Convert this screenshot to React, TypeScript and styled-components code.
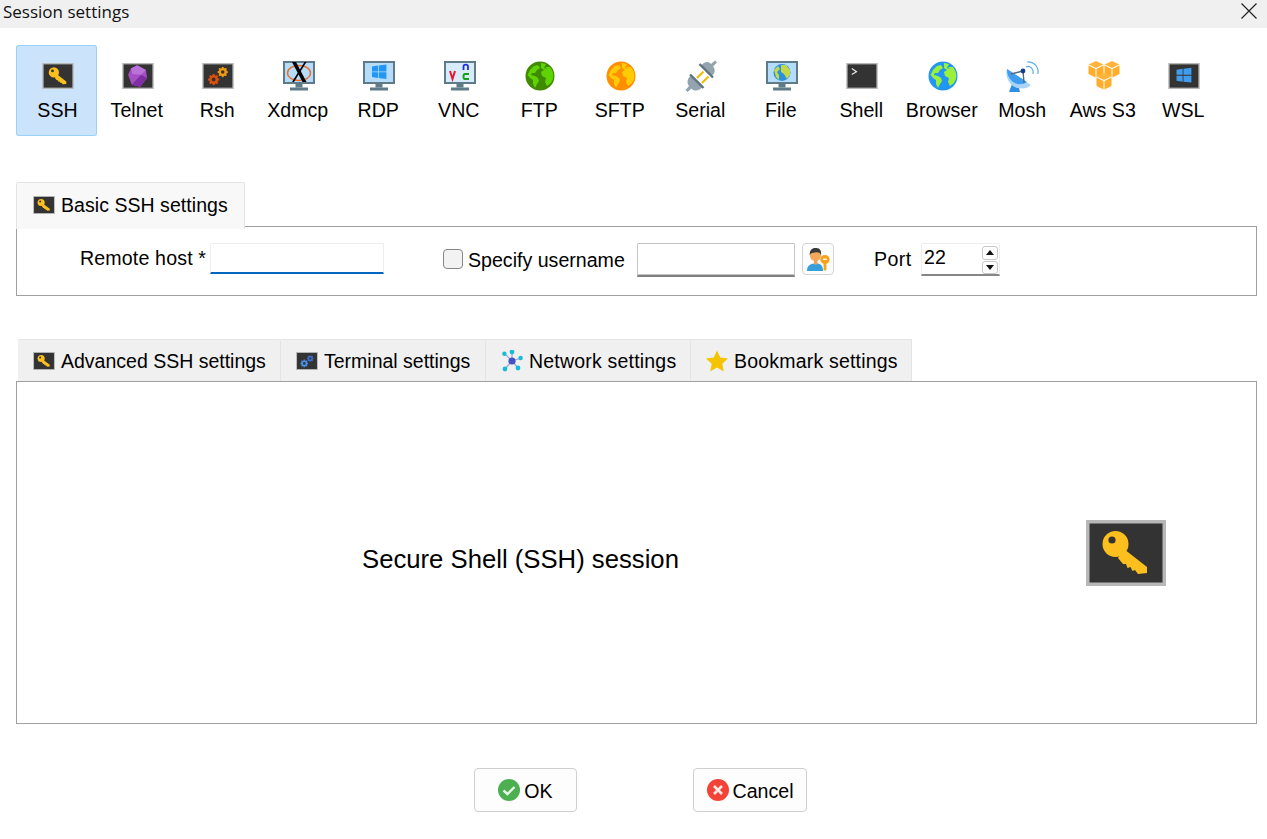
import React from "react";
import styled, { createGlobalStyle } from "styled-components";

const GlobalStyle = createGlobalStyle`
  html, body {
    margin: 0;
    padding: 0;
    background: #fff;
  }
  body {
    font-family: "Liberation Sans", Arial, sans-serif;
    color: #000;
    overflow: hidden;
  }
`;

/* ---------- icons ---------- */

const KeyShape = () => (
  <g fill="#fdbf1e">
    <circle cx="29.5" cy="24" r="13" />
    <path d="M38 29 L61 47 L61 53 L52 54 L49 50 L46.5 51 L44.5 47 L41.5 48 L40 44 L37 44 L32 38 Z" />
    <circle cx="26" cy="20" r="3.6" fill="#333" />
  </g>
);

const Tile = ({ children, w, h }: { children: React.ReactNode; w: number; h: number }) => (
  <svg width={w} height={h} viewBox="0 0 80 66">
    <rect x="0" y="0" width="80" height="66" fill="#b8b8b8" />
    <rect x="3.5" y="3.5" width="73" height="59" fill="#333" />
    {children}
  </svg>
);

const Gear = ({ cx, cy, r, fill }: { cx: number; cy: number; r: number; fill: string }) => (
  <g>
    <circle cx={cx} cy={cy} r={r * 0.62} fill="none" stroke={fill} strokeWidth={r * 0.48} />
    {[0, 45, 90, 135, 180, 225, 270, 315].map((a) => (
      <rect
        key={a}
        x={cx - r * 0.2}
        y={cy - r * 1.08}
        width={r * 0.4}
        height={r * 0.4}
        fill={fill}
        transform={`rotate(${a} ${cx} ${cy})`}
      />
    ))}
  </g>
);

const WindowsPanes = ({ x, y, s, fill }: { x: number; y: number; s: number; fill: string }) => (
  <path
    fill={fill}
    transform={`translate(${x} ${y}) scale(${s})`}
    d="M0 2.4 L7.4 1.3 V8.6 H0 Z M8.4 1.1 L18 0 V8.6 H8.4 Z M0 9.6 H7.4 V16.8 L0 15.7 Z M8.4 9.6 H18 V18 L8.4 16.9 Z"
  />
);

const Monitor = ({ children }: { children: React.ReactNode }) => (
  <svg width="32" height="32" viewBox="0 0 32 32">
    <rect x="0" y="1" width="32" height="23" fill="#5f7b88" />
    <rect x="2" y="3" width="28" height="19" fill="#b6dcfb" />
    <rect x="12.5" y="24" width="7" height="3.5" fill="#5f7b88" />
    <rect x="7" y="27.5" width="18" height="3" fill="#5f7b88" />
    {children}
  </svg>
);

const Globe = ({ sea, land, size = 32 }: { sea: string; land: string; size?: number }) => (
  <svg width={size} height={size} viewBox="0 0 32 32">
    <circle cx="16" cy="16" r="14.5" fill={sea} />
    <path
      fill={land}
      d="M17 3 L22 4 L20 8 L23 9 L21 7 L26 7 C29 11 30 15 29 19 L27 23 L23 26 L21 22 L22 18 L18 16 L17 12 L20 10 L17 8 Z M6 10 L10 6 L14 5 L16 8 L13 10 L11 13 L8 13 L7 15 L11 16 L14 18 L15 21 L13 24 L11 28 L9 24 L9 20 L6 18 L3.5 15 Z"
    />
  </svg>
);

const icons: Record<string, React.ReactNode> = {
  SSH: (
    <Tile w={32} h={26}>
      <KeyShape />
    </Tile>
  ),
  Telnet: (
    <Tile w={32} h={26}>
      <path d="M38 6 L60 18 L63 38 L46 60 L24 55 L15 30 L22 14 Z" fill="#a64fc4" />
      <path d="M38 6 L60 18 L48 30 L26 28 L22 14 Z" fill="#bb72da" />
      <path d="M48 30 L63 38 L46 60 L24 55 Z" fill="#7f2fa3" />
    </Tile>
  ),
  Rsh: (
    <Tile w={32} h={26}>
      <Gear cx={52} cy={23} r={12} fill="#f29a10" />
      <Gear cx={29} cy={42} r={13} fill="#e0500c" />
    </Tile>
  ),
  Xdmcp: (
    <Monitor>
      <ellipse cx="16" cy="13" rx="11.5" ry="7.5" fill="none" stroke="#e8702a" strokeWidth="1.4" />
      <path d="M9 2 H13 L23.5 22 H19.5 Z" fill="#000" />
      <path d="M21.5 2 H23.5 L11 22 H9 Z" fill="#000" />
    </Monitor>
  ),
  RDP: (
    <Monitor>
      <WindowsPanes x={9} y={4.5} s={0.8} fill="#2196f3" />
    </Monitor>
  ),
  VNC: (
    <Monitor>
      <rect x="2" y="3" width="28" height="19" fill="#d8ebfb" />
      <path d="M6 11 L8.5 19 L11 11" fill="none" stroke="#e8192c" strokeWidth="2" />
      <path d="M19.5 10 V6.5 C19.5 4 24 4 24 6.5 V10" fill="none" stroke="#2030e0" strokeWidth="1.8" />
      <path d="M25 14 H21 C19 14 19 19 21 19 H25" fill="none" stroke="#14a014" strokeWidth="2" />
    </Monitor>
  ),
  FTP: <Globe sea="#3f8a00" land="#5fd300" />,
  SFTP: <Globe sea="#ff8f00" land="#ffcb05" />,
  Serial: (
    <svg width="32" height="32" viewBox="0 0 32 32">
      <path d="M12 18 L18.5 11.5 M17 23 L23.5 16.5" stroke="#f5b800" strokeWidth="2" />
      <path d="M7 15 L18 26 C15 31 9 32 6.5 28.5 L2.5 32 L0.5 30 L4 26 C1 22 3 17 7 15 Z" fill="#93a4af" />
      <path d="M16 6 C19 1 24 1 26 4 L30 0.5 L32 2.5 L28 6.5 C31 10 30 14 26 16 Z" fill="#93a4af" />
      <path d="M5 14.5 L18.5 28 M14.5 4 L28 17.5" stroke="#5f7480" strokeWidth="2.4" />
    </svg>
  ),
  File: (
    <Monitor>
      <circle cx="16" cy="12.5" r="8.5" fill="#2c8fe0" />
      <path
        d="M15 5 L20 5 L24 10 L24 15 L21 19 L18 14 L15 12 Z M8 10 L12 6 L14 9 L11 12 L13 15 L13 20 L10 17 Z"
        fill="#c3d94a"
      />
    </Monitor>
  ),
  Shell: (
    <Tile w={32} h={26}>
      <path d="M14 14 L26 22 L14 29" fill="none" stroke="#e8e8e8" strokeWidth="3" />
    </Tile>
  ),
  Browser: <Globe sea="#2196f3" land="#9bf03c" />,
  Mosh: (
    <svg width="36" height="32" viewBox="0 0 36 32">
      <path d="M22 2 C28 1 34 6 33 14" fill="none" stroke="#58aef0" strokeWidth="1.2" />
      <path d="M21 7 C25 5 29 9 28 14" fill="none" stroke="#58aef0" strokeWidth="1.2" />
      <path d="M4 32 L7 24 L13 24 L15 32 Z" fill="#2f8fe6" />
      <path d="M2 9 L26 25 C21 30 13 29 8 26 C3 22 0 15 2 9 Z" fill="#a8d4f8" />
      <path d="M2 9 L22 22 C16 26 9 24 6 20 C3 17 2 13 2 9 Z" fill="#3e9df0" />
      <path d="M6 14 L18 11 L19 23" fill="none" stroke="#566b78" strokeWidth="1.4" />
      <circle cx="18" cy="11" r="2.4" fill="#103f8c" />
    </svg>
  ),
  "Aws S3": (
    <svg width="32" height="32" viewBox="0 0 32 32">
      {[
        [8, 1],
        [24, 1],
        [16, 13],
      ].map(([x, y]) => (
        <g key={`${x}-${y}`} transform={`translate(${x} ${y})`}>
          <path d="M0 0 L7.5 3.5 L0 7 L-7.5 3.5 Z" fill="#ffb53c" />
          <path d="M-7.5 4.5 L-0.5 8 V16.5 L-7.5 13 Z" fill="#ffad2a" />
          <path d="M7.5 4.5 L0.5 8 V16.5 L7.5 13 Z" fill="#ffad2a" />
        </g>
      ))}
    </svg>
  ),
  WSL: (
    <Tile w={32} h={26}>
      <WindowsPanes x={21} y={12} s={2.1} fill="#3f9df0" />
    </Tile>
  ),
};

const TerminalTabIcon = () => (
  <Tile w={22} h={18}>
    <Gear cx={52} cy={24} r={11} fill="#3f6fd0" />
    <Gear cx={30} cy={42} r={13} fill="#4a90e8" />
  </Tile>
);

const NetworkIcon = () => (
  <svg width="22" height="22" viewBox="0 0 22 22">
    <g stroke="#9aa7d8" strokeWidth="1.2">
      <path d="M11 11 L3 3 M11 11 L11 1.5 M11 11 L20 8 M11 11 L4 19 M11 11 L17 18" />
    </g>
    <circle cx="11" cy="11" r="3.6" fill="#4353c4" />
    <g fill="#18bcd6">
      <circle cx="3.4" cy="3.8" r="2.2" />
      <circle cx="11" cy="2" r="2.4" />
      <circle cx="19.6" cy="8" r="2.2" />
      <circle cx="4" cy="19" r="2.4" />
      <circle cx="17" cy="18" r="2.4" />
    </g>
  </svg>
);

const StarIcon = () => (
  <svg width="22" height="22" viewBox="0 0 22 22">
    <path d="M11 0.5 L14.3 7.6 L22 8.5 L16.3 13.7 L17.8 21.4 L11 17.6 L4.2 21.4 L5.7 13.7 L0 8.5 L7.7 7.6 Z" fill="#f5c400" />
  </svg>
);

const UserKeyIcon = () => (
  <svg width="24" height="24" viewBox="0 0 24 24">
    <path d="M1 24 C1 18 5 16.5 10 16.5 C14 16.5 17 18 17 24 Z" fill="#35a0dc" />
    <circle cx="9.5" cy="8.5" r="5.6" fill="#f5a95a" />
    <path d="M3.8 8 C3 2 8 0.5 10.5 1 C14 1.2 15.5 4 15 8 C14 5.5 12 5 9 5.5 C6.5 5.8 5 6 3.8 8 Z" fill="#3a3a3a" />
    <rect x="8" y="13" width="3.4" height="4.5" fill="#f0a050" />
    <circle cx="19" cy="12.5" r="4.6" fill="#f9a11b" />
    <rect x="17.2" y="11.6" width="3.6" height="1.4" fill="#fff" />
    <path d="M17.6 16 H20.4 V22.5 L19 24 L17.6 22.5 Z" fill="#f9a11b" />
  </svg>
);

const CheckBadge = () => (
  <svg width="22" height="22" viewBox="0 0 22 22">
    <circle cx="11" cy="11" r="11" fill="#4caf50" />
    <path d="M5.5 11.5 L9.5 15 L16.5 8" fill="none" stroke="#e8f5e9" strokeWidth="2.4" />
  </svg>
);

const CrossBadge = () => (
  <svg width="22" height="22" viewBox="0 0 22 22">
    <circle cx="11" cy="11" r="11" fill="#f44336" />
    <path d="M7 7 L15 15 M15 7 L7 15" stroke="#fde8e6" strokeWidth="2.6" />
  </svg>
);

/* ---------- layout ---------- */

const Page = styled.div`
  width: 1267px;
  height: 839px;
  background: #fff;
  overflow: hidden;
`;

const TitleBar = styled.div`
  height: 28px;
  background: #f0f0f0;
  display: flex;
  align-items: center;
  justify-content: space-between;
  padding: 0 10px 0 3px;
`;

const TitleText = styled.div`
  font-family: "Open Sans", "Noto Sans", sans-serif;
  font-size: 17px;
  color: #111;
  margin-top: -6px;
`;

const CloseButton = styled.div`
  display: flex;
  margin-top: -7px;
`;

const Toolbar = styled.div`
  display: flex;
  margin: 17px 0 0 16px;
`;

const ToolButton = styled.div<{ $active?: boolean }>`
  width: ${(p) => (p.$active ? 81 : 80.5)}px;
  height: 91px;
  box-sizing: border-box;
  display: flex;
  flex-direction: column;
  align-items: center;
  padding: 15px 0 0 ${(p) => (p.$active ? 2 : 1)}px;
  border-radius: 3px;
  background: ${(p) => (p.$active ? "#cce4fb" : "transparent")};
  box-shadow: ${(p) => (p.$active ? "inset 0 0 0 1px #99d1fb" : "none")};
`;

const ToolIcon = styled.div`
  height: 32px;
  display: flex;
  align-items: center;
  justify-content: center;
`;

const ToolLabel = styled.div<{ $active?: boolean }>`
  font-size: 19.6px;
  line-height: 23px;
  margin-top: 7px;
  padding-right: ${(p) => (p.$active ? 0 : 2)}px;
  white-space: nowrap;
`;

const BasicSection = styled.section`
  margin: 46px 10px 0 16px;
`;

const AdvancedSection = styled.section`
  margin: 43px 10px 0 16px;
`;

const TabStrip = styled.div<{ $inset?: number }>`
  display: flex;
  padding-left: ${(p) => p.$inset ?? 0}px;
  position: relative;
  z-index: 1;
`;

const Tab = styled.div<{ $selected?: boolean; $width: number }>`
  width: ${(p) => p.$width}px;
  height: ${(p) => (p.$selected ? 47 : 42)}px;
  margin-bottom: ${(p) => (p.$selected ? -3 : 0)}px;
  box-sizing: border-box;
  display: flex;
  align-items: center;
  gap: 6px;
  padding: ${(p) => (p.$selected ? "0 0 3px 16px" : "0 0 0 15px")};
  background: ${(p) => (p.$selected ? "#f8f8f8" : "#f0f0f0")};
  border: 1px solid #e4e4e4;
  border-left-width: ${(p) => (p.$selected ? 1 : 0)}px;
  border-bottom: none;
  font-size: 19.5px;
  white-space: nowrap;
  &:first-child {
    border-radius: 2px 2px 0 0;
  }
`;

const TabLabel = styled.span<{ $spacing?: number }>`
  padding-top: 2px;
  letter-spacing: ${(p) => p.$spacing ?? 0}px;
`;

const BasicPanel = styled.div`
  height: 70px;
  box-sizing: border-box;
  border: 1px solid #a0a0a0;
  display: flex;
  align-items: flex-start;
  padding-top: 16px;
`;

const FieldLabel = styled.label<{ $left: number; $top: number; $width: number; $spacing?: number }>`
  width: ${(p) => p.$width}px;
  font-size: 19.6px;
  line-height: 23px;
  margin-left: ${(p) => p.$left}px;
  margin-top: ${(p) => p.$top}px;
  letter-spacing: ${(p) => p.$spacing ?? 0}px;
  white-space: nowrap;
`;

const HostInput = styled.div`
  width: 174px;
  height: 31px;
  box-sizing: border-box;
  margin-left: 4px;
  border: 1px solid #eeeeee;
  border-bottom: 2px solid #0067c0;
  border-radius: 2px 2px 0 0;
`;

const CheckBox = styled.div`
  width: 20px;
  height: 20px;
  box-sizing: border-box;
  margin: 6px 0 0 59px;
  background: #f2f2f2;
  border: 1px solid #858585;
  border-radius: 4px;
`;

const UserInput = styled.div`
  width: 158px;
  height: 34px;
  box-sizing: border-box;
  margin-left: 12px;
  border: 1px solid #c4c4c4;
  border-bottom: 2px solid #808080;
  border-radius: 2px 2px 0 0;
  box-shadow: inset 0 -1px 0 #c4c4c4;
`;

const IconButton = styled.div`
  width: 32px;
  height: 32px;
  box-sizing: border-box;
  margin-left: 7px;
  display: flex;
  align-items: center;
  justify-content: center;
  border: 1px solid #d4d4d4;
  border-radius: 4px;
  background: #fdfdfd;
`;

const PortInput = styled.div`
  width: 79px;
  height: 33px;
  box-sizing: border-box;
  margin-left: 9px;
  display: flex;
  justify-content: space-between;
  padding: 0 1px 0 2px;
  border: 1px solid #eeeeee;
  border-bottom: 2px solid #868686;
  border-radius: 2px 2px 0 0;
  font-size: 19.6px;
  line-height: 27px;
`;

const SpinColumn = styled.div`
  display: flex;
  flex-direction: column;
  gap: 1px;
  padding-top: 2px;
`;

const SpinButton = styled.div`
  width: 16px;
  height: 14px;
  box-sizing: border-box;
  display: flex;
  align-items: center;
  justify-content: center;
  border: 1px solid #c8c8c8;
  border-radius: 3px;
  background: #fff;
`;

const Arrow = styled.div<{ $down?: boolean }>`
  width: 0;
  height: 0;
  border-left: 4px solid transparent;
  border-right: 4px solid transparent;
  border-${(p) => (p.$down ? "top" : "bottom")}: 5px solid #111;
`;

const InfoPanel = styled.div`
  height: 343px;
  box-sizing: border-box;
  border: 1px solid #a0a0a0;
  display: flex;
  align-items: flex-start;
`;

const InfoText = styled.div`
  width: 724px;
  margin: 161px 0 0 345px;
  font-size: 25.7px;
  line-height: 32px;
`;

const InfoIcon = styled.div`
  display: flex;
  margin-top: 138px;
  width: 80px;
`;

const Footer = styled.div`
  display: flex;
  gap: 116px;
  margin: 44px 0 0 474px;
`;

const DialogButton = styled.div<{ $width: number }>`
  width: ${(p) => p.$width}px;
  height: 44px;
  box-sizing: border-box;
  display: flex;
  align-items: center;
  justify-content: center;
  gap: 4px;
  border: 1px solid #cfcfcf;
  border-radius: 4px;
  background: #fdfdfd;
  font-size: 19.6px;
`;

const DialogLabel = styled.span`
  padding-top: 2px;
`;

const tools = [
  "SSH",
  "Telnet",
  "Rsh",
  "Xdmcp",
  "RDP",
  "VNC",
  "FTP",
  "SFTP",
  "Serial",
  "File",
  "Shell",
  "Browser",
  "Mosh",
  "Aws S3",
  "WSL",
];

export default function App() {
  return (
    <Page>
      <GlobalStyle />
      <TitleBar>
        <TitleText>Session settings</TitleText>
        <CloseButton>
          <svg width="16" height="16" viewBox="0 0 16 16">
            <path d="M0.5 0.5 L15.5 15.5 M15.5 0.5 L0.5 15.5" stroke="#222" strokeWidth="1.2" />
          </svg>
        </CloseButton>
      </TitleBar>

      <Toolbar>
        {tools.map((name, i) => (
          <ToolButton key={name} $active={i === 0}>
            <ToolIcon>{icons[name]}</ToolIcon>
            <ToolLabel $active={i === 0}>{name}</ToolLabel>
          </ToolButton>
        ))}
      </Toolbar>

      <BasicSection>
        <TabStrip>
          <Tab $selected $width={229}>
            <Tile w={22} h={18}>
              <KeyShape />
            </Tile>
            <TabLabel $spacing={0.05}>Basic SSH settings</TabLabel>
          </Tab>
        </TabStrip>
        <BasicPanel>
          <FieldLabel $left={63} $top={4} $width={126} $spacing={0.15}>
            Remote host *
          </FieldLabel>
          <HostInput />
          <CheckBox />
          <FieldLabel $left={5} $top={6} $width={157}>
            Specify username
          </FieldLabel>
          <UserInput />
          <IconButton>
            <UserKeyIcon />
          </IconButton>
          <FieldLabel $left={40} $top={5} $width={38} $spacing={0.4}>
            Port
          </FieldLabel>
          <PortInput>
            22
            <SpinColumn>
              <SpinButton>
                <Arrow />
              </SpinButton>
              <SpinButton>
                <Arrow $down />
              </SpinButton>
            </SpinColumn>
          </PortInput>
        </BasicPanel>
      </BasicSection>

      <AdvancedSection>
        <TabStrip $inset={2}>
          <Tab $width={263}>
            <Tile w={22} h={18}>
              <KeyShape />
            </Tile>
            <TabLabel>Advanced SSH settings</TabLabel>
          </Tab>
          <Tab $width={205}>
            <TerminalTabIcon />
            <TabLabel>Terminal settings</TabLabel>
          </Tab>
          <Tab $width={205}>
            <NetworkIcon />
            <TabLabel $spacing={0.2}>Network settings</TabLabel>
          </Tab>
          <Tab $width={221}>
            <StarIcon />
            <TabLabel $spacing={0.2}>Bookmark settings</TabLabel>
          </Tab>
        </TabStrip>
        <InfoPanel>
          <InfoText>Secure Shell (SSH) session</InfoText>
          <InfoIcon>
            <Tile w={80} h={66}>
              <KeyShape />
            </Tile>
          </InfoIcon>
        </InfoPanel>
      </AdvancedSection>

      <Footer>
        <DialogButton $width={103}>
          <CheckBadge />
          <DialogLabel>OK</DialogLabel>
        </DialogButton>
        <DialogButton $width={114}>
          <CrossBadge />
          <DialogLabel>Cancel</DialogLabel>
        </DialogButton>
      </Footer>
    </Page>
  );
}
